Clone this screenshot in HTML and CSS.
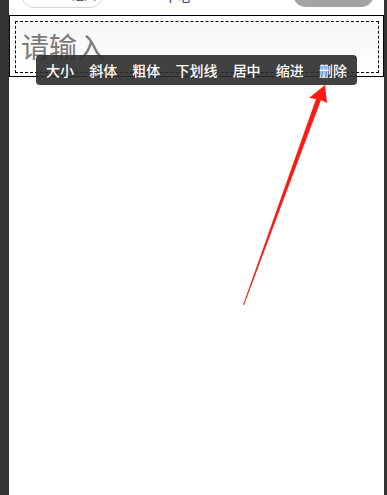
FILE: index.html
```html
<!DOCTYPE html>
<html lang="zh">
<head>
<meta charset="utf-8">
<link rel="stylesheet" href="styles.css">
</head>
<body>
<div class="frame">
  <div class="side-left"></div>
  <main class="page">
    <header class="topbar">
      <div class="pill-back"><span class="back-arrow">‹</span><span class="back-text">返回</span></div>
      <div class="title">中心</div>
      <div class="pill-grey"></div>
    </header>
    <section class="editor">
      <div class="editable">请输入</div>
    </section>
    <div class="toolbar">
      <span>大小</span><span>斜体</span><span>粗体</span><span>下划线</span><span>居中</span><span>缩进</span><span>删除</span>
    </div>
    <svg class="arrow" width="375" height="495" viewBox="0 0 375 495">
      <polygon points="234,305 307,99 300,98 316,85 318,103 312,100 235,305" fill="#ff1a14"/>
    </svg>
  </main>
  <div class="side-right"></div>
</div>
</body>
</html>
```

FILE: styles.css
```css
html, body {
  margin: 0;
  padding: 0;
  background: #333333;
}
body {
  font-family: "Noto Sans CJK SC", "Liberation Sans", sans-serif;
}
.frame {
  display: flex;
  width: 387px;
  height: 495px;
  overflow: hidden;
}
.side-left {
  width: 9px;
  background: #333333;
  flex: none;
}
.side-right {
  width: 3px;
  background: #333333;
  flex: none;
}
.page {
  position: relative;
  width: 375px;
  background: #ffffff;
  flex: none;
}
.topbar {
  height: 15px;
  overflow: hidden;
  display: flex;
  align-items: flex-start;
}
.pill-back {
  margin-left: 12px;
  margin-top: -20px;
  width: 80px;
  height: 26px;
  border: 1px solid #d4d4d4;
  border-radius: 13px;
  background: #fff;
  display: flex;
  align-items: flex-end;
  box-sizing: content-box;
  overflow: hidden;
}
.back-arrow {
  margin-left: 18px;
  font-size: 14px;
  line-height: 14px;
  color: #333;
  margin-bottom: 6px;
}
.back-text {
  margin-left: 28px;
  font-size: 12px;
  line-height: 12px;
  color: #333;
  margin-bottom: 6px;
}
.title {
  margin-left: 60px;
  margin-top: -13px;
  font-size: 15px;
  line-height: 16px;
  color: #1a4f8c;
}
.pill-grey {
  margin-left: auto;
  margin-right: 10px;
  margin-top: -20px;
  width: 81px;
  height: 27px;
  border-radius: 13px;
  background: #a3a3a3;
}
.editor {
  border: 1px solid #000;
  height: 62px;
  box-sizing: border-box;
  padding: 5px 4px 5px 5px;
}
.editable {
  height: 50px;
  border: 1px dashed #000;
  background: linear-gradient(#f6f6f6, #ffffff);
  font-size: 28px;
  line-height: 48px;
  color: #7a7a7a;
  padding-left: 5px;
}
.toolbar {
  position: absolute;
  left: 27px;
  top: 55px;
  width: 321px;
  height: 30px;
  box-sizing: border-box;
  padding: 0 10px;
  border-radius: 4px;
  background: rgba(44, 44, 44, 0.9);
  display: flex;
  justify-content: space-between;
  align-items: center;
  color: #ffffff;
  font-size: 14px;
  font-weight: 500;
}
.arrow {
  position: absolute;
  left: 0;
  top: 0;
  pointer-events: none;
}
```
